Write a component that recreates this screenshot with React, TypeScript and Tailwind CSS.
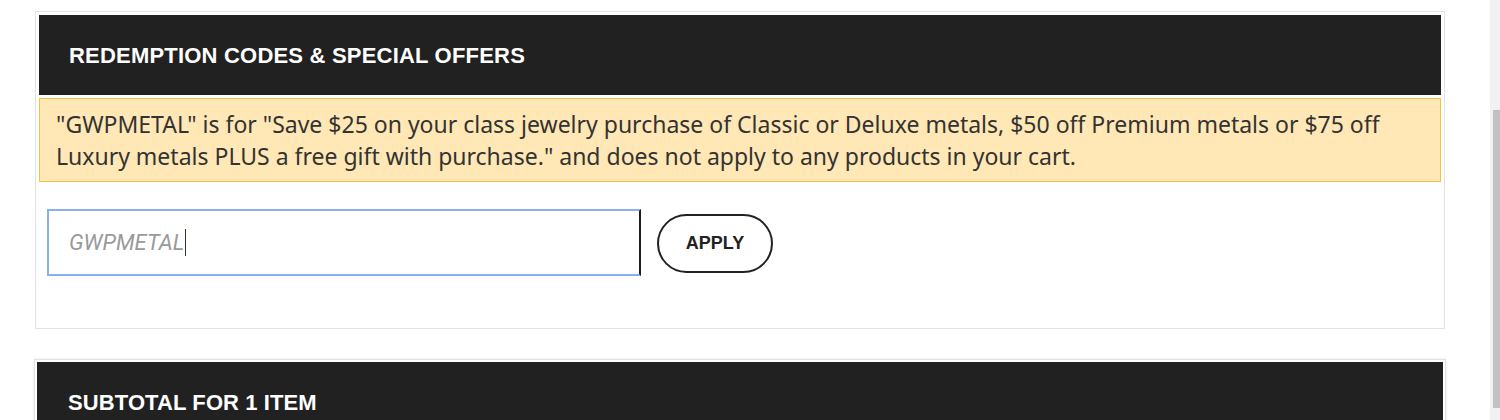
import React from "react";

export default function App() {
  return (
    <div className="flex h-[420px] w-[1500px] overflow-hidden bg-white">
      <div className="flex-1">
        <div className="ml-[35px] mt-[11px] w-[1410px] border border-[#e2e2e2] p-[3px]">
          <div className="flex h-[80px] items-center bg-[#212121] pl-[30px] font-['Liberation_Sans',Arial,sans-serif] text-[22px] font-bold tracking-[0.2px] text-white">
            REDEMPTION CODES &amp; SPECIAL OFFERS
          </div>
          <div className="mt-[3px] border border-[#f1c443] bg-[#ffe8b5] px-[16px] py-[9px] font-['Noto_Sans',sans-serif] text-[23px] leading-[32px] text-[#333333]">
            "GWPMETAL" is for "Save $25 on your class jewelry purchase of Classic or Deluxe metals, $50 off Premium metals or $75 off Luxury metals PLUS a free gift with purchase." and does not apply to any products in your cart.
          </div>
          <div className="flex items-center pb-[49px] pl-[8px] pt-[27px]">
            <div className="flex h-[67px] w-[594px] items-center border-2 border-[#88b0f2] border-r-[#1c1c1c] pl-[20px]">
              <span className="font-['Roboto',sans-serif] text-[22px] italic text-[#9a9a9a]">
                GWPMETAL
              </span>
              <span className="ml-[1px] h-[27px] w-px bg-[#333333]" />
            </div>
            <button className="ml-[16px] mt-[1px] flex h-[59px] w-[116px] items-center justify-center rounded-full border-2 border-[#222222] font-['Liberation_Sans',Arial,sans-serif] text-[18px] font-bold text-[#222222]">
              APPLY
            </button>
          </div>
        </div>
        <div className="ml-[34px] mt-[30px] w-[1412px] border border-[#e2e2e2] px-[2px] pt-[2px] shadow-[0_0_2px_rgba(0,0,0,0.12)]">
          <div className="flex h-[80px] items-center bg-[#212121] pl-[31px] font-['Liberation_Sans',Arial,sans-serif] text-[22px] font-bold tracking-[0.1px] text-white">
            SUBTOTAL FOR 1 ITEM
          </div>
        </div>
      </div>
      <div className="w-[10px] bg-[#f1f1f1]">
        <div className="ml-[3px] mt-[110px] h-[298px] w-[7px] bg-[#c1c1c1]" />
      </div>
    </div>
  );
}
